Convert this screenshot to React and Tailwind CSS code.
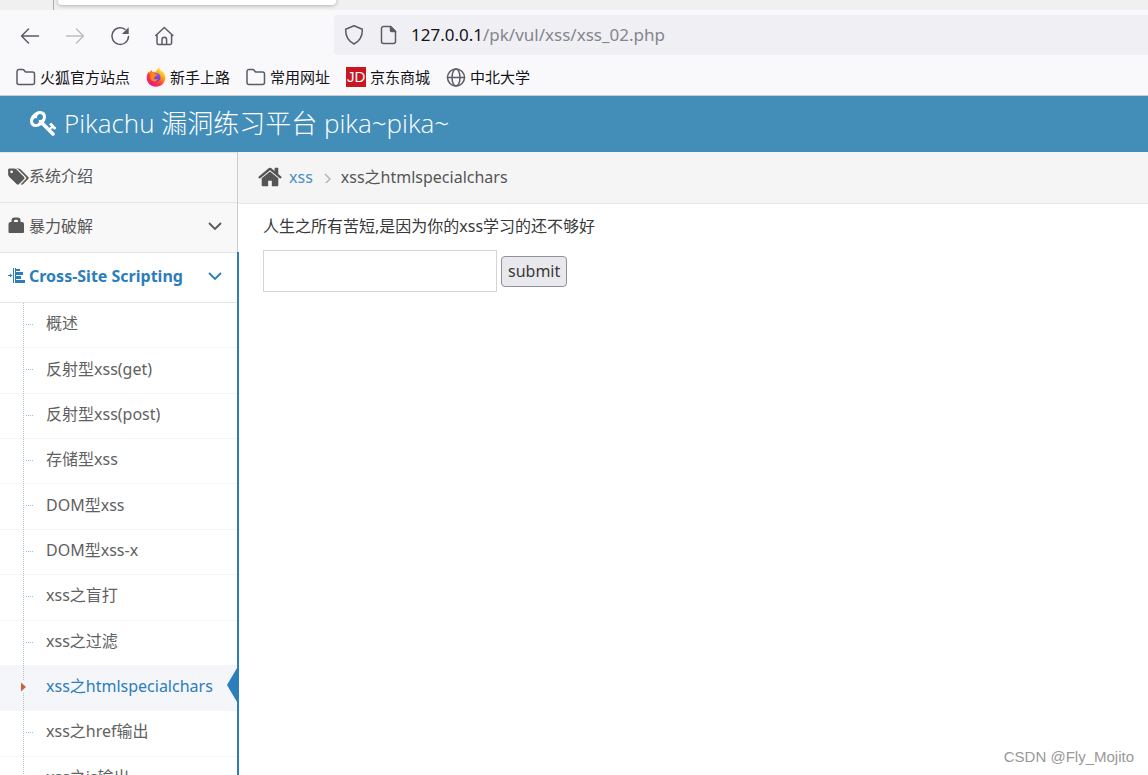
import React from 'react';

const bookmarks = [
  { label: '火狐官方站点', icon: 'folder' },
  { label: '新手上路', icon: 'firefox' },
  { label: '常用网址', icon: 'folder' },
  { label: '京东商城', icon: 'jd' },
  { label: '中北大学', icon: 'globe' }
];

const xssItems = [
  '概述',
  '反射型xss(get)',
  '反射型xss(post)',
  '存储型xss',
  'DOM型xss',
  'DOM型xss-x',
  'xss之盲打',
  'xss之过滤',
  'xss之htmlspecialchars',
  'xss之href输出',
  'xss之js输出'
];

const ACTIVE_ITEM = 'xss之htmlspecialchars';

const LineIcon = ({ children, className = '' }) => (
  <svg
    className={`h-5 w-5 shrink-0 ${className}`}
    viewBox="0 0 20 20"
    fill="none"
    stroke="currentColor"
    strokeWidth="1.5"
    strokeLinecap="round"
    strokeLinejoin="round"
    aria-hidden="true"
  >
    {children}
  </svg>
);

const FirefoxIcon = () => (
  <svg className="h-5 w-5 shrink-0" viewBox="0 0 20 20" aria-hidden="true">
    <defs>
      <linearGradient id="fox" x1="0.85" y1="0.1" x2="0.2" y2="0.95">
        <stop offset="0" stopColor="#fff44f" />
        <stop offset="0.35" stopColor="#ff980e" />
        <stop offset="0.65" stopColor="#ff3647" />
        <stop offset="1" stopColor="#e31587" />
      </linearGradient>
      <linearGradient id="globe" x1="0.5" y1="0" x2="0.5" y2="1">
        <stop offset="0" stopColor="#9059ff" />
        <stop offset="1" stopColor="#5b3fc4" />
      </linearGradient>
    </defs>
    <path fill="url(#fox)" d="M13.200.500c.3 1.900 1.500 3 2.700 4.300.1-.4.100-.8 0-1.200 2.200 1.700 3.400 4.300 3.400 7.100 0 5-4.200 9-9.300 9S.7 15.700.7 10.700c0-2.900 1-4.900 2.300-6.300 0 .6.1 1 .3 1.400C4 4.400 4.900 3.400 5.800 2.800c-.1 1 .1 1.600.6 2.100 1.100-.3 2.300-.2 3.300.3.500-2.100 1.700-3.700 3.500-4.700z" />
    <circle cx="10.200" cy="10.300" r="4.300" fill="url(#globe)" />
    <path fill="#ff8a16" d="M4.500 6.300c1.700-.6 3.600-.2 4.800.9l2.300.3c-.2 1-1.700 1.200-2.300 1.700-.2.900-.8 1.300-1.700 1.600.4 1.600 2.600 2 4.500.9-.8 2.300-3.200 3.300-5.300 2.300C4.300 12.800 3.600 9.200 4.500 6.300z" />
  </svg>
);

const BookmarkIcon = ({ type }) => {
  if (type === 'firefox') return <FirefoxIcon />;
  if (type === 'jd') {
    return (
      <span className="flex h-5 w-5 shrink-0 items-center justify-center bg-[#c81623] font-['Liberation_Sans',sans-serif] text-[15px] leading-5 text-white" aria-hidden="true">
        JD
      </span>
    );
  }
  if (type === 'globe') {
    return (
      <LineIcon className="text-[#5b5b66]">
        <circle cx="10" cy="10.500" r="8.500" />
        <ellipse cx="10" cy="10.500" rx="4" ry="8.500" />
        <path d="M1.500 10.500h17" />
      </LineIcon>
    );
  }
  return (
    <LineIcon className="text-[#5b5b66]">
      <path d="M1 15.500V4.500a2 2 0 0 1 2-2h3.600a2 2 0 0 1 1.500.7L9.500 5H16.500a2 2 0 0 1 2 2v8.500a2 2 0 0 1-2 2H3a2 2 0 0 1-2-2z" />
    </LineIcon>
  );
};

const KeyIcon = () => (
  <svg className="h-7 w-7 shrink-0" viewBox="0 0 1792 1792" fill="currentColor" aria-hidden="true">
    <path d="M832 512q0-80-56-136t-136-56-136 56-56 136q0 42 19 83-41-19-83-19-80 0-136 56t-56 136 56 136 136 56 136-56 56-136q0-42-19-83 41 19 83 19 80 0 136-56t56-136zm851 704q0 17-49 66t-66 49q-9 0-28.500-16t-36.500-33-38.500-40-24.500-26l-96 96 220 220q28 28 28 68 0 42-39 81t-81 39q-40 0-68-28l-671-671q-176 131-365 131-163 0-265.500-102.500t-102.500-265.500q0-160 95-313t248-248 313-95q163 0 265.500 102.500t102.500 265.500q0 189-131 365l355 355 96-96q-3-3-26-24.500t-40-38.500-33-36.500-16-28.500q0-17 49-66t66-49q13 0 23 10 6 6 46 44.500t82 79.500 86.500 86 73 78 28.500 41z" />
  </svg>
);

const TagsIcon = () => (
  <svg className="h-[18px] w-[21px] shrink-0" viewBox="0 0 1920 1664" fill="currentColor" aria-hidden="true">
    <path d="M448 448q0-53-37.500-90.500t-90.500-37.500-90.500 37.500-37.500 90.500 37.500 90.500 90.500 37.500 90.500-37.500 37.500-90.500zm1067 576q0 53-37 90l-491 492q-39 37-91 37-53 0-90-37l-715-716q-38-37-64.500-101t-26.500-117v-416q0-52 38-90t90-38h416q53 0 117 26.500t102 64.500l715 714q37 39 37 91zm384 0q0 53-37 90l-491 492q-39 37-91 37-36 0-59-14t-53-45l470-470q37-37 37-90 0-52-37-91l-715-714q-38-38-102-64.500t-117-26.500h224q53 0 117 26.500t102 64.500l715 714q37 39 37 91z" />
  </svg>
);

const LockIcon = () => (
  <svg className="h-[18px] w-[21px] shrink-0" viewBox="0 0 21 18" fill="currentColor" aria-hidden="true">
    <path fillRule="evenodd" d="M3.500 5V3.500A3 3 0 0 1 6.500 .5h3a3 3 0 0 1 3 3V5h1.500a2 2 0 0 1 2 2v8a1 1 0 0 1-1 1H1.500a1 1 0 0 1-1-1V7a2 2 0 0 1 2-2zM6 5h4V4a1.300 1.300 0 0 0-1.300-1.300H7.300A1.300 1.300 0 0 0 6 4z" />
  </svg>
);

const IndentIcon = () => (
  <svg className="h-[18px] w-[21px] shrink-0" viewBox="0 0 21 18" fill="currentColor" aria-hidden="true">
    <path d="M5 1h1v15H5zM0 8h2V6.500L4.500 8.500 2 10.500V9H0zM7 1h1v15H7zM8 2h4v2H8zM8 5h7v3H8zM8 9h5v3H8zM8 13h9v3H8z" />
  </svg>
);

const HomeIcon = () => (
  <svg className="h-6 w-6 shrink-0" viewBox="64 64 1664 1664" fill="currentColor" aria-hidden="true">
    <path d="M1472 992v480q0 26-19 45t-45 19h-384v-384h-256v384h-384q-26 0-45-19t-19-45v-480q0-1 .5-3t.5-3l575-474 575 474q1 2 1 6zm223-69l-62 74q-8 9-21 11h-3q-13 0-21-7l-692-577-692 577q-12 8-24 7-13-2-21-11l-62-74q-8-10-7-23.500t11-21.500l719-599q32-26 76-26t76 26l244 204v-195q0-14 9-23t23-9h192q14 0 23 9t9 23v408l219 182q10 8 11 21.500t-7 23.500z" />
  </svg>
);

const ChevronDown = () => (
  <svg className="ml-auto h-4 w-4" viewBox="0 0 16 16" fill="none" stroke="currentColor" strokeWidth="1.800" aria-hidden="true">
    <path d="M2 5l6 6 6-6" />
  </svg>
);

const BrowserChrome = () => (
  <div className="shrink-0 border-b border-[#cccccc] bg-[#f9f9fb] text-[#5b5b66]">
    {/* Bottom edge of the tab strip */}
    <div className="flex h-[10px] overflow-hidden bg-[#f0f0f0]">
      <div className="w-[54px] border-r border-[#aaaaaa]" />
      <div className="ml-1 h-[5px] w-[278px] rounded-b bg-white shadow-[0_0_4px_rgba(0,0,0,0.4)]" />
    </div>

    {/* Navigation bar */}
    <div className="flex h-[50px] items-center">
      <div className="flex w-[334px] shrink-0 items-center gap-[25px] pt-px pl-5">
        <button type="button" aria-label="后退" className="h-5 w-5">
          <LineIcon><path d="M18.500 10H1.500M8.500 3l-7 7 7 7" /></LineIcon>
        </button>
        <button type="button" aria-label="前进" className="h-5 w-5 text-[#bdbdc2]" disabled>
          <LineIcon><path d="M1.500 10h17M11.500 3l7 7-7 7" /></LineIcon>
        </button>
        <button type="button" aria-label="刷新" className="h-5 w-5">
          <LineIcon>
            <path d="M18.500 10.500A8.300 8.300 0 1 1 15 3.300" />
            <path fill="currentColor" stroke="none" d="M18.700 1.200v6.300a.6.6 0 0 1-.6.6h-6.200z" />
          </LineIcon>
        </button>
        <button type="button" aria-label="主页" className="h-5 w-5">
          <LineIcon>
            <path d="M.8 9.500L9.300 1.500L17.800 9.500M2 8.500V17a1.500 1.500 0 0 0 1.500 1.500h11.600a1.500 1.500 0 0 0 1.500-1.500V8.500M7 18.500V13.500a2.300 2.300 0 0 1 4.600 0v5" />
          </LineIcon>
        </button>
      </div>
      <div className="flex h-10 flex-1 items-center rounded-l bg-[#f0f0f4] pl-[10px]">
        <LineIcon>
          <path d="M10 .8l8.300 3.500c.3 6.700-2.800 12-8.300 14.700C4.500 16.300 1.400 11 1.700 4.300z" />
        </LineIcon>
        <LineIcon className="ml-[15px]">
          <path d="M11.500 1.500H4.500a2 2 0 0 0-2 2v13a2 2 0 0 0 2 2h10a2 2 0 0 0 2-2V6.500z" />
          <path fill="currentColor" d="M11.500 1.500V5.500a1 1 0 0 0 1 1h4z" />
        </LineIcon>
        <span className="ml-3 text-[17px] leading-6 text-[#85858d]">
          <span className="text-[#15141a]">127.0.0.1</span>/pk/vul/xss/xss_02.php
        </span>
      </div>
    </div>

    {/* Bookmarks */}
    <nav className="flex h-[35px] items-center gap-4 pb-[2px] pl-4">
      {bookmarks.map((item) => (
        <a key={item.label} href="#" className="flex items-center gap-1 text-[15px] leading-5 text-[#15141a]">
          <BookmarkIcon type={item.icon} />
          {item.label}
        </a>
      ))}
    </nav>
  </div>
);

const SubItem = ({ label, active }) => (
  <li className="relative border-b border-dotted border-[#eeeeee]">
    <a
      href="#"
      className={`flex h-full items-center pb-1 pl-[46px] ${active ? 'bg-[#f4f6fa] text-[#2b7dbc]' : 'text-[#616161]'}`}
    >
      {label}
    </a>
    {active ? (
      <>
        <svg className="absolute top-[15px] left-[20px] z-20 h-3 w-2 bg-[#f4f6fa] text-[#c86139]" viewBox="0 0 8 12" fill="currentColor" aria-hidden="true">
          <path d="M1 1.500l5 4.500-5 4.500z" />
        </svg>
        <svg className="absolute top-[2px] right-0 h-[34px] w-[10px] text-[#2b7dbc]" viewBox="0 0 10 34" fill="currentColor" aria-hidden="true">
          <path d="M10 0v34L0 17z" />
        </svg>
      </>
    ) : (
      <span className="absolute top-[21px] left-[26px] w-[7px] border-t border-dotted border-[#9dbdd6]" />
    )}
  </li>
);

const Sidebar = () => (
  <aside className="w-[238px] shrink-0 border-r border-[#cccccc] bg-[#f2f2f2] text-[#585858]">
    <ul className="border-t border-[#e5e5e5]">
      <li className="border-b border-[#e5e5e5]">
        <a href="#" className="flex h-[49px] items-center bg-[#f8f8f8] pb-[3px] pl-2">
          <TagsIcon />
          系统介绍
        </a>
      </li>
      <li className="border-b border-[#e5e5e5]">
        <a href="#" className="flex h-[49px] items-center bg-[#f8f8f8] pr-[14px] pb-[3px] pl-2">
          <LockIcon />
          暴力破解
          <ChevronDown />
        </a>
      </li>
      <li className="relative bg-white">
        <a href="#" className="flex h-[50px] items-center border-b border-[#e5e5e5] pr-[14px] pb-[3px] pl-2 font-bold text-[#2b7dbc]">
          <IndentIcon />
          Cross-Site Scripting
          <ChevronDown />
        </a>
        <div className="relative">
          <span className="absolute inset-y-0 left-[23px] z-10 border-l border-dotted border-[#b4c0cb]" />
          <ul className="grid min-h-[499px] auto-rows-fr">
            {xssItems.map((label) => (
              <SubItem key={label} label={label} active={label === ACTIVE_ITEM} />
            ))}
          </ul>
        </div>
        <span className="absolute -top-px -right-[2px] bottom-0 w-[2px] bg-[#2b7dbc]" />
      </li>
    </ul>
  </aside>
);

const App = () => {
  return (
    <div className="relative flex h-screen flex-col overflow-hidden bg-white font-['Noto_Sans','Noto_Sans_CJK_SC',sans-serif] text-base leading-6 text-[#393939]">
      <BrowserChrome />

      <header className="flex h-14 shrink-0 items-center bg-[#438eb9] pb-[2px] pl-[30px] text-white">
        <a href="#" className="flex items-center gap-[6px] font-['Open_Sans','Noto_Sans_CJK_SC',sans-serif] text-[26px] leading-9 font-light">
          <KeyIcon />
          Pikachu 漏洞练习平台 pika~pika~
        </a>
      </header>

      <div className="flex min-h-0 flex-1">
        <Sidebar />
        <main className="min-w-0 flex-1">
          <nav className="flex h-[52px] items-center border-b border-[#e5e5e5] bg-[#f5f5f5] pb-[2px] pl-5 text-[#555555]">
            <HomeIcon />
            <a href="#" className="ml-[7px] text-[#4c8fbd]">xss</a>
            <svg className="mx-2 h-3 w-3 text-[#b2b6bf]" viewBox="0 0 12 12" fill="none" stroke="currentColor" strokeWidth="1.500" aria-hidden="true">
              <path d="M4 3l5 5-5 5" />
            </svg>
            <span>xss之htmlspecialchars</span>
          </nav>

          <div className="px-[25px] pt-[10px]">
            <p>人生之所有苦短,是因为你的xss学习的还不够好</p>
            <form className="mt-3 flex items-center gap-1" onSubmit={(e) => e.preventDefault()}>
              <input
                type="text"
                name="message"
                aria-label="message"
                className="h-[42px] w-[234px] border border-[#d5d5d5] bg-white px-1 outline-none"
              />
              <button type="submit" className="h-[31px] rounded border border-[#8f8f9d] bg-[#e9e9ed] px-[6px]">
                submit
              </button>
            </form>
          </div>
        </main>
      </div>

      <span className="absolute right-[14px] bottom-2 font-['Liberation_Sans',sans-serif] text-[15px] leading-5 text-[#999999]">
        CSDN @Fly_Mojito
      </span>
    </div>
  );
};

export default App;
